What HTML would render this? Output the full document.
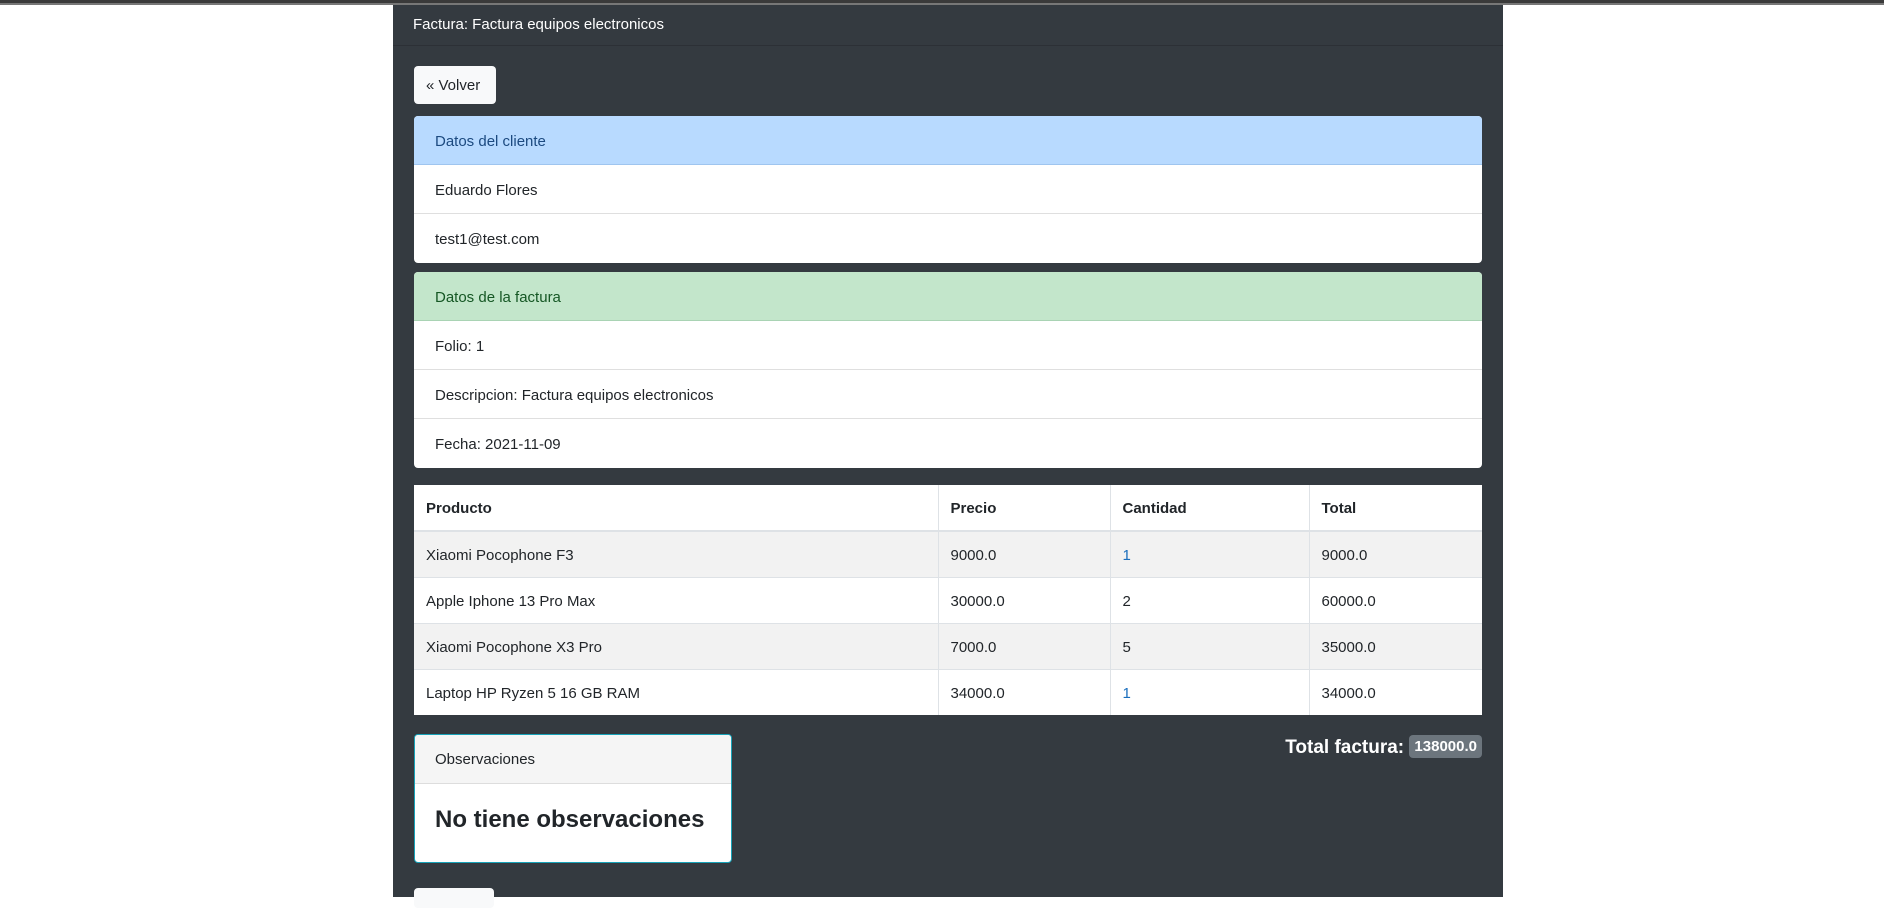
<!DOCTYPE html>
<html><head><meta charset="utf-8"><style>
*{box-sizing:border-box;margin:0;padding:0}
body{width:1884px;height:897px;background:#fff;font-family:"Liberation Sans",sans-serif;font-size:16px;color:#212529;position:relative;overflow:hidden}
.topbar{position:absolute;left:0;top:0;width:1884px;height:5px;background:#3a3a3a;border-bottom:2px solid #777}
.panel{position:absolute;left:393px;top:5px;width:1110px;height:892px;background:#343a40}
.hdr{position:absolute;left:0;top:0;width:100%;height:41px;border-bottom:1px solid #2c3036;color:#fff;font-size:15px;padding:11px 20px}
.btn{position:absolute;background:#f8f9fa;border-radius:4px;color:#212529;font-size:15px;white-space:nowrap}
.card{position:absolute;background:#fff;border-radius:4px;overflow:hidden}
.card div{height:49px;border-bottom:1px solid #dfdfdf;padding:17px 21px 0;font-size:15px}
.card div:last-child{border-bottom:none}
table{position:absolute;left:21px;top:480px;width:1068px;border-collapse:collapse;background:#fff;font-size:15px}
td,th{border-left:1px solid #dee2e6;padding:2px 12px 0;text-align:left;height:46px;border-top:1px solid #dee2e6}
th{border-bottom:2px solid #dee2e6;border-top:none}
td:first-child,th:first-child{border-left:none}
tr.s td{background:#f2f2f2}
.b{color:#1a6ebd}
</style></head><body>
<div class="topbar"></div>
<div class="panel">
<div class="hdr">Factura: Factura equipos electronicos</div>
<div class="btn" style="left:21px;top:61px;width:82px;height:38px;padding:11px 12px">« Volver</div>
<div class="card" style="left:21px;top:111px;width:1068px">
<div style="background:#b8daff;color:#1c4a80;border-bottom:1px solid #9fc5ef">Datos del cliente</div>
<div>Eduardo Flores</div><div>test1@test.com</div></div>
<div class="card" style="left:21px;top:267px;width:1068px">
<div style="background:#c3e6cb;color:#155724;border-bottom:1px solid #a9d3b4">Datos de la factura</div>
<div>Folio: 1</div><div>Descripcion: Factura equipos electronicos</div><div>Fecha: 2021-11-09</div></div>
<table>
<tr><th style="width:524px">Producto</th><th style="width:172px">Precio</th><th style="width:199px">Cantidad</th><th>Total</th></tr>
<tr class="s"><td>Xiaomi Pocophone F3</td><td>9000.0</td><td class="b">1</td><td>9000.0</td></tr>
<tr><td>Apple Iphone 13 Pro Max</td><td>30000.0</td><td>2</td><td>60000.0</td></tr>
<tr class="s"><td>Xiaomi Pocophone X3 Pro</td><td>7000.0</td><td>5</td><td>35000.0</td></tr>
<tr><td>Laptop HP Ryzen 5 16 GB RAM</td><td>34000.0</td><td class="b">1</td><td>34000.0</td></tr>
</table>
<div class="card" style="left:21px;top:729px;width:318px;height:129px;border:1px solid #17a2b8">
<div style="background:#f5f5f5;border-bottom:1px solid #ddd;padding:16px 20px 0">Observaciones</div>
<div style="font-size:24px;font-weight:bold;padding:22px 20px 0;height:auto;white-space:nowrap">No tiene observaciones</div></div>
<div style="position:absolute;right:21px;top:730px;color:#fff;font-size:19px;font-weight:bold">Total factura: <span style="display:inline-block;background:#6c757d;border-radius:4px;font-size:15px;padding:3px 5px;vertical-align:2px">138000.0</span></div>
<div class="btn" style="left:21px;top:883px;width:80px;height:20px"></div>
</div>
</body></html>
